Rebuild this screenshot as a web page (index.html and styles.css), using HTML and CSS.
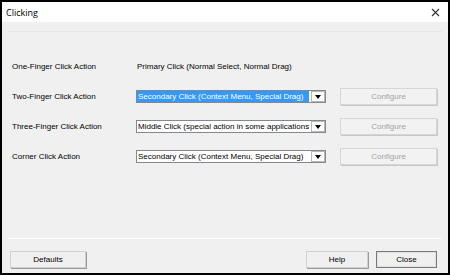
FILE: index.html
```html
<!DOCTYPE html>
<html>
<head>
<meta charset="utf-8">
<link rel="stylesheet" href="styles.css">
</head>
<body>
<div class="window">
  <div class="titlebar">
    <span class="title">Clicking</span>
    <svg class="close" width="9" height="9" viewBox="0 0 9 9"><path d="M1 1L8 8M8 1L1 8" stroke="#333" stroke-width="1.1"/></svg>
  </div>
  <div class="panel">
    <div class="rows">
      <div class="label">One-Finger Click Action</div>
      <div class="value">Primary Click (Normal Select, Normal Drag)</div>
      <div></div>

      <div class="label">Two-Finger Click Action</div>
      <div class="select"><span class="sel-text selected">Secondary Click (Context Menu, Special Drag)</span><span class="arrow"></span></div>
      <div class="btn disabled">Configure</div>

      <div class="label">Three-Finger Click Action</div>
      <div class="select"><span class="sel-text">Middle Click (special action in some applications)</span><span class="arrow"></span></div>
      <div class="btn disabled">Configure</div>

      <div class="label">Corner Click Action</div>
      <div class="select"><span class="sel-text">Secondary Click (Context Menu, Special Drag)</span><span class="arrow"></span></div>
      <div class="btn disabled">Configure</div>
    </div>
  </div>
  <div class="footer">
    <div class="btn defaults">Defaults</div>
    <div class="spacer"></div>
    <div class="btn help">Help</div>
    <div class="btn close-btn">Close</div>
  </div>
</div>
</body>
</html>
```

FILE: styles.css
```css
html, body {
  margin: 0;
  padding: 0;
}
body {
  font-family: "Liberation Sans", Arial, sans-serif;
  font-size: 8px;
  color: #000;
}
.window {
  width: 450px;
  height: 275px;
  box-sizing: border-box;
  border: 2px solid #000;
  background: #f0f0f0;
  display: flex;
  flex-direction: column;
}
.titlebar {
  height: 20px;
  flex: none;
  background: #fff;
  display: flex;
  align-items: center;
  justify-content: space-between;
  padding: 0 8px 0 4px;
}
.title {
  font-family: "Open Sans", "Liberation Sans", sans-serif;
  font-size: 9px;
  color: #000;
}
.panel {
  height: 208px;
  margin: 9px 6px 0 6px;
  border-top: 1px solid #e6e6e6;
  border-bottom: 1px solid #ffffff;
  box-sizing: border-box;
  padding-top: 26px;
}
.rows {
  display: grid;
  grid-template-columns: 110px 190px 97px;
  column-gap: 14px;
  row-gap: 14px;
  grid-auto-rows: 16px;
  align-items: center;
  padding-left: 4px;
}
.label, .value {
  white-space: nowrap;
}
.value {
  padding-left: 1px;
}
.select {
  height: 13px;
  box-sizing: border-box;
  border: 1px solid #828790;
  background: #fff;
  display: flex;
  align-items: stretch;
  overflow: hidden;
}
.sel-text {
  flex: 1;
  white-space: nowrap;
  overflow: hidden;
  line-height: 11px;
  padding-left: 1px;
}
.sel-text.selected {
  background: #3399ff;
  color: #fff;
}
.arrow {
  width: 14px;
  flex: none;
  box-sizing: border-box;
  border: 1px solid #b8b8b8;
  background: #fff;
  position: relative;
  margin-left: 2px;
}
.arrow::after {
  content: "";
  position: absolute;
  left: 3px;
  top: 3px;
  border-left: 3px solid transparent;
  border-right: 3px solid transparent;
  border-top: 4px solid #000;
}
.btn {
  height: 17px;
  box-sizing: border-box;
  border: 1px solid #adadad;
  background: #e5e5e5;
  display: flex;
  align-items: center;
  justify-content: center;
  white-space: nowrap;
}
.btn.disabled {
  color: #a3a3a3;
  background: #f2f2f2;
  border: 1px solid #d6d6d6;
  box-shadow: 1px 1px 0 #c8c8c8;
}
.footer {
  flex: 1;
  display: flex;
  align-items: center;
  padding: 6px 11px 0 8px;
  gap: 8px;
}
.spacer {
  flex: 1;
}
.defaults {
  width: 76px;
  box-shadow: 1px 1px 0 #9a9a9a;
  border-color: #d0d0d0;
  background: #f0f0f0;
}
.help {
  width: 62px;
  box-shadow: 1px 1px 0 #9a9a9a;
  border-color: #d0d0d0;
  background: #f0f0f0;
}
.close-btn {
  width: 61px;
  border: 1px solid #7a7a7a;
  box-shadow: inset 0 0 0 1px #e0e0e0;
  background: #f0f0f0;
}
```
